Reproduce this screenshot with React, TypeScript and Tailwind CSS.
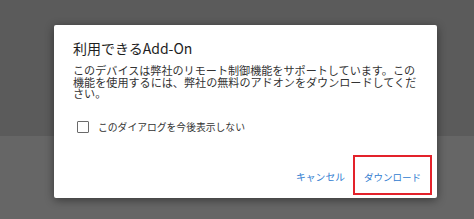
export default function App() {
  return (
    <div
      className="relative w-[474px] h-[219px] overflow-hidden"
      style={{ fontFamily: '"Noto Sans CJK JP", "Noto Sans", sans-serif' }}
    >
      {/* background behind the modal */}
      <div className="flex flex-col h-full">
        <div className="h-[136px] bg-[#5b5b5b]" />
        <div className="flex-1 bg-[#666666]" />
      </div>

      {/* dialog */}
      <div className="absolute left-[54px] top-[25px] w-[383px] h-[173px] bg-white rounded-[2px] shadow-[0_2px_10px_rgba(0,0,0,0.45)] flex flex-col">
        <div className="pl-[19px] pr-[14px] pt-[13px]">
          <h2 className="text-[14px] leading-[20px] font-normal text-[#1e1e1e]">
            利用できるAdd-On
          </h2>
          <p className="mt-[7px] text-[11.1px] leading-[11.5px] text-[#333333]">
            このデバイスは弊社のリモート制御機能をサポートしています。この機能を使用するには、弊社の無料のアドオンをダウンロードしてください。
          </p>
          <label className="mt-[21px] ml-[4px] flex items-center gap-[9px]">
            <span className="w-[12px] h-[12px] border-[1.5px] border-[#6a6a6a] rounded-[1px]" />
            <span className="text-[9.8px] leading-[12px] text-[#333333]">
              このダイアログを今後表示しない
            </span>
          </label>
        </div>

        <div className="mt-auto flex items-center justify-end pr-[5px] pb-[3px]">
          <button className="text-[9.8px] leading-[12px] font-normal text-[#2f7bcf] mt-[4px] mr-[8px]">
            キャンセル
          </button>
          <button className="w-[79px] h-[40px] border-2 border-[#e3222b] flex items-center justify-center pt-[4px] text-[9.5px] leading-[12px] font-normal text-[#2f7bcf]">
            ダウンロード
          </button>
        </div>
      </div>
    </div>
  );
}
